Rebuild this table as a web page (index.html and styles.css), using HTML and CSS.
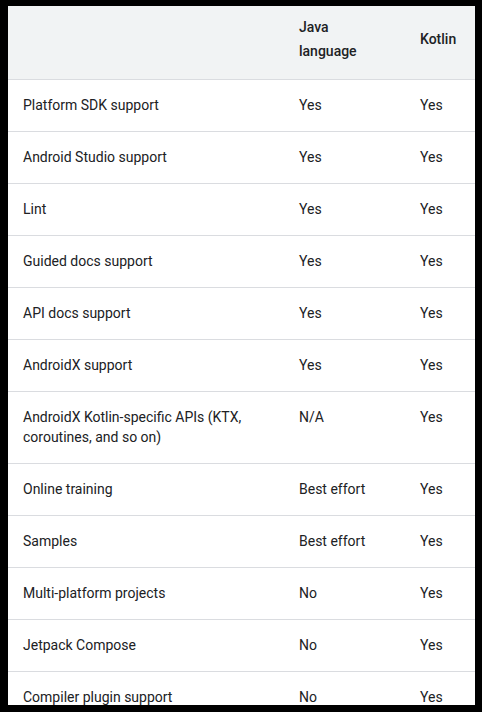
FILE: index.html
```html
<!DOCTYPE html>
<html lang="en">
<head>
<meta charset="utf-8">
<title>Java vs Kotlin support</title>
<link rel="stylesheet" href="styles.css">
</head>
<body>
<div class="frame">
  <table class="compare">
    <colgroup>
      <col class="c-feature">
      <col class="c-java">
      <col class="c-kotlin">
    </colgroup>
    <thead>
      <tr>
        <th></th>
        <th>Java language</th>
        <th>Kotlin</th>
      </tr>
    </thead>
    <tbody>
      <tr><td>Platform SDK support</td><td>Yes</td><td>Yes</td></tr>
      <tr><td>Android Studio support</td><td>Yes</td><td>Yes</td></tr>
      <tr><td>Lint</td><td>Yes</td><td>Yes</td></tr>
      <tr><td>Guided docs support</td><td>Yes</td><td>Yes</td></tr>
      <tr><td>API docs support</td><td>Yes</td><td>Yes</td></tr>
      <tr><td>AndroidX support</td><td>Yes</td><td>Yes</td></tr>
      <tr><td>AndroidX Kotlin-specific APIs (KTX, coroutines, and so on)</td><td>N/A</td><td>Yes</td></tr>
      <tr><td>Online training</td><td>Best effort</td><td>Yes</td></tr>
      <tr><td>Samples</td><td>Best effort</td><td>Yes</td></tr>
      <tr><td>Multi-platform projects</td><td>No</td><td>Yes</td></tr>
      <tr><td>Jetpack Compose</td><td>No</td><td>Yes</td></tr>
      <tr><td>Compiler plugin support</td><td>No</td><td>Yes</td></tr>
    </tbody>
  </table>
</div>
</body>
</html>
```
FILE: styles.css
```css
html, body {
  margin: 0;
  height: 712px;
  overflow: hidden;
}
body {
  background: #000;
  padding: 6px 7px 0 8px;
  box-sizing: border-box;
}
.frame {
  background: #fff;
  height: 699px;
  overflow: hidden;
}
.compare {
  border-collapse: collapse;
  table-layout: fixed;
  width: 469px;
  font-family: Roboto, "Liberation Sans", sans-serif;
  font-size: 14px;
  color: #202124;
}
.c-feature { width: 275px; }
.c-java { width: 121px; }
.c-kotlin { width: 73px; }
.compare th {
  background: #f1f3f4;
  font-weight: 500;
  text-align: left;
  line-height: 24px;
  padding: 9px 16px 16px;
  vertical-align: middle;
  border-bottom: 1px solid #dadce0;
}
.compare td {
  line-height: 20px;
  padding: 15px 16px 16px;
  vertical-align: top;
  border-bottom: 1px solid #dadce0;
}
.compare td:first-child {
  padding-left: 15px;
}
```
